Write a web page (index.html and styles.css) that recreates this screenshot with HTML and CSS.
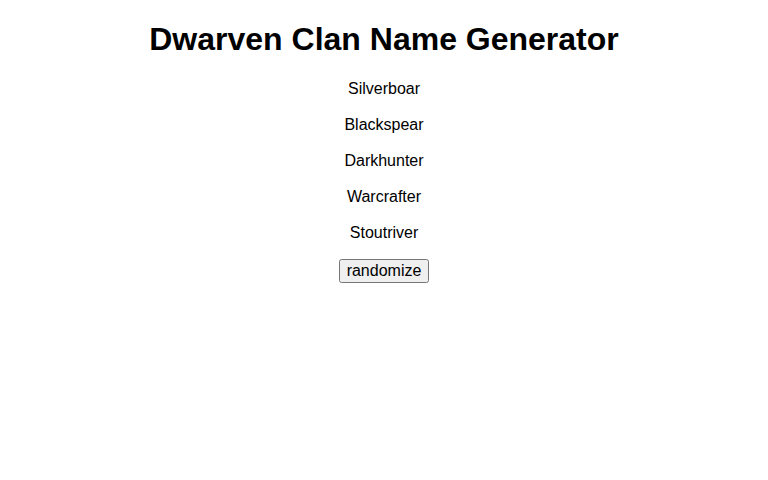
FILE: index.html
```html
<!DOCTYPE html>
<html>
<head>
<meta charset="utf-8">
<link rel="stylesheet" href="styles.css">
</head>
<body>
<div class="app">
  <h1 class="title">Dwarven Clan Name Generator</h1>
  <ul class="names">
    <li class="name">Silverboar</li>
    <li class="name">Blackspear</li>
    <li class="name">Darkhunter</li>
    <li class="name">Warcrafter</li>
    <li class="name">Stoutriver</li>
  </ul>
  <button class="btn">randomize</button>
</div>
</body>
</html>
```
FILE: styles.css
```css
body {
  margin: 0 8px;
  font-family: "Liberation Sans", Arial, sans-serif;
  color: #000;
  background: #fff;
}
.app {
  text-align: center;
  padding-top: 21px;
}
.title {
  font-size: 32px;
  font-weight: bold;
  margin: 0 0 21px;
}
.names {
  list-style: none;
  margin: 0;
  padding: 0;
}
.name {
  font-size: 16px;
  line-height: 20px;
  margin: 16px 0;
}
.btn {
  font-family: "Liberation Sans", Arial, sans-serif;
  font-size: 16px;
  margin-top: 0;
}
```
